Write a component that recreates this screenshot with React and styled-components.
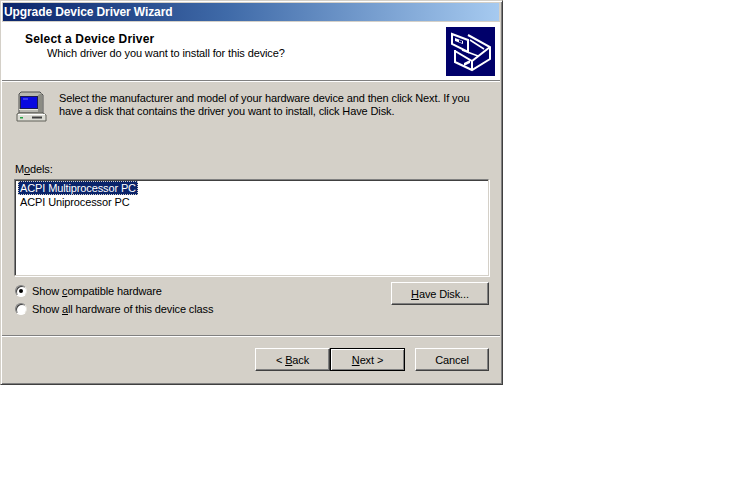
import React from 'react';
import styled, { createGlobalStyle } from 'styled-components';

const GlobalStyle = createGlobalStyle`
  html, body {
    margin: 0;
    padding: 0;
    background: #fff;
  }
  body {
    font-family: "Liberation Sans", Arial, sans-serif;
    font-size: 11px;
    letter-spacing: -0.12px;
    color: #000;
  }
`;

// Window frame
const Wizard = styled.div`
  box-sizing: border-box;
  width: 503px;
  height: 385px;
  display: flex;
  flex-direction: column;
  background: #d4d0c8;
  border: 1px solid;
  border-color: #d4d0c8 #404040 #404040 #d4d0c8;
  box-shadow: inset 1px 1px 0 #fff, inset -1px -1px 0 #808080;
  padding: 2px 3px 0 2px;
`;

const TitleBar = styled.div`
  height: 18px;
  flex: none;
  display: flex;
  align-items: center;
  padding-left: 1px;
  background: linear-gradient(90deg, #0a246a 0%, #3f6aa8 45%, #a6caf0 100%);
  color: #fff;
  font-weight: bold;
  font-size: 12px;
  letter-spacing: -0.1px;
`;

const Header = styled.div`
  height: 58px;
  flex: none;
  margin: 1px -1px 0 -1px;
  display: flex;
  justify-content: space-between;
  background: #fff;
  border-bottom: 1px solid #808080;
  box-shadow: 0 1px 0 #fff;
`;

const HeaderText = styled.div`
  padding: 10px 0 0 23px;
`;

const HeaderTitle = styled.div`
  font-weight: bold;
  font-size: 12px;
  letter-spacing: 0.18px;
  line-height: 14px;
`;

const HeaderSub = styled.div`
  padding-left: 22px;
  line-height: 15px;
`;

const DriverLogo = styled.svg`
  width: 49px;
  height: 49px;
  margin: 5px 5px 0 0;
  flex: none;
`;

const Body = styled.div`
  flex: none;
  height: 254px;
  box-sizing: border-box;
  display: flex;
  flex-direction: column;
  padding: 9px 10px 0 11px;
`;

const Intro = styled.div`
  display: flex;
  gap: 11px;
  padding-left: 2px;
  height: 73px;
  flex: none;
`;

const IntroText = styled.p`
  margin: 0;
  padding-top: 2px;
  width: 425px;
  line-height: 13px;
`;

const PcIcon = styled.svg`
  width: 32px;
  height: 32px;
  flex: none;
`;

const FieldLabel = styled.div`
  flex: none;
  height: 16px;
  padding-left: 1px;
  line-height: 13px;
`;

const ListBox = styled.div`
  box-sizing: border-box;
  flex: none;
  height: 97px;
  padding: 1px;
  background: #fff;
  border: 1px solid;
  border-color: #808080 #d4d0c8 #d4d0c8 #808080;
  box-shadow: inset 1px 1px 0 #404040, 1px 1px 0 #fff;
`;

const ListItem = styled.div`
  box-sizing: border-box;
  width: fit-content;
  height: 14px;
  margin-left: 2px;
  padding: 0 2px 0 2px;
  line-height: 14px;
  background: ${(p) => (p.$selected ? '#0a246a' : 'transparent')};
  color: ${(p) => (p.$selected ? '#fff' : '#000')};
  outline: ${(p) => (p.$selected ? '1px dotted #d4d0c8' : 'none')};
  outline-offset: -1px;
`;

const OptionsRow = styled.div`
  flex: none;
  display: flex;
  justify-content: space-between;
  align-items: flex-start;
  padding-top: 6px;
`;

const RadioGroup = styled.div`
  display: flex;
  flex-direction: column;
  gap: 4px;
  padding-top: 2px;
`;

const RadioRow = styled.label`
  display: flex;
  align-items: center;
  gap: 5px;
  height: 14px;
  padding-left: 1px;
`;

const RadioDot = styled.span`
  box-sizing: border-box;
  width: 12px;
  height: 12px;
  flex: none;
  border-radius: 50%;
  background: #fff;
  border: 1px solid;
  border-color: #808080 #e8e6e0 #fff #808080;
  box-shadow: inset 1px 1px 0 #404040;
  display: flex;
  align-items: center;
  justify-content: center;

  &::after {
    content: '';
    width: 4px;
    height: 4px;
    border-radius: 50%;
    background: ${(p) => (p.$checked ? '#000' : 'transparent')};
  }
`;

const Underlined = styled.span`
  text-decoration: underline;
  text-underline-offset: 1px;
`;

const Button = styled.button`
  box-sizing: border-box;
  flex: none;
  width: ${(p) => p.$width}px;
  height: 23px;
  margin: 0;
  padding: 0;
  font: inherit;
  letter-spacing: inherit;
  color: #000;
  background: #d4d0c8;
  border: 1px solid;
  border-color: ${(p) =>
    p.$default ? '#000' : '#fff #404040 #404040 #fff'};
  box-shadow: ${(p) =>
    p.$default
      ? 'inset 1px 1px 0 #fff, inset -1px -1px 0 #808080'
      : 'inset -1px -1px 0 #808080'};
`;

const Divider = styled.div`
  height: 1px;
  flex: none;
  margin: 0 -1px;
  background: #808080;
  box-shadow: 0 1px 0 #fff;
`;

const Footer = styled.div`
  flex: 1;
  display: flex;
  justify-content: flex-end;
  padding: 12px 10px 0 0;
`;

const NavGroup = styled.div`
  display: flex;
  margin-right: 10px;
`;

function PcGlyph() {
  return (
    <PcIcon viewBox="0 0 32 32">
      <path d="M3 4l2-2h19l3 3v18H3z" fill="#b8b8b0" stroke="#505050" />
      <path d="M22 5l4-2v19l-4 1z" fill="#8c8c84" />
      <rect x="4.5" y="6.5" width="17" height="12" fill="#0808e0" stroke="#1c1c50" />
      <path d="M7 9h5" stroke="#7070ff" />
      <path d="M3 19.5h19" stroke="#e8e8e0" />
      <path d="M1 24l2-1h24l3 2v6H1z" fill="#dcdcd4" stroke="#606058" />
      <path d="M2 24.5h27" stroke="#fff" />
      <rect x="4" y="27" width="3" height="1.5" fill="#20a040" />
      <rect x="16" y="26.5" width="10" height="2" fill="#404040" />
    </PcIcon>
  );
}

function DriverGlyph() {
  return (
    <DriverLogo viewBox="0 0 49 49">
      <rect width="49" height="49" fill="#00006a" />
      <g fill="none" stroke="#fff" strokeWidth="2">
        <path d="M22 8l22 12v12L26 43 9 35V23" />
        <path d="M9 24l17 10 18-14" />
        <path d="M26 34v9" />
        <path d="M16 23l16 6" strokeWidth="1.5" />
        <path d="M24 13l14 9" strokeWidth="1.5" />
      </g>
      <path d="M6 7l16 6v12L6 17z" fill="#00006a" stroke="#fff" strokeWidth="2" />
      <path d="M9 11l8 3v3l-8-3z" fill="#fff" />
      <path d="M13 13l3 1v2l-3-1z" fill="#00006a" />
      <path d="M18 39l6-3v-3l-6 3z" fill="#fff" />
    </DriverLogo>
  );
}

export default function App() {
  return (
    <>
      <GlobalStyle />
      <Wizard>
        <TitleBar>Upgrade Device Driver Wizard</TitleBar>

        <Header>
          <HeaderText>
            <HeaderTitle>Select a Device Driver</HeaderTitle>
            <HeaderSub>Which driver do you want to install for this device?</HeaderSub>
          </HeaderText>
          <DriverGlyph />
        </Header>

        <Body>
          <Intro>
            <PcGlyph />
            <IntroText>
              Select the manufacturer and model of your hardware device and then click Next. If you
              have a disk that contains the driver you want to install, click Have Disk.
            </IntroText>
          </Intro>

          <FieldLabel>
            M<Underlined>o</Underlined>dels:
          </FieldLabel>
          <ListBox>
            <ListItem $selected>ACPI Multiprocessor PC</ListItem>
            <ListItem>ACPI Uniprocessor PC</ListItem>
          </ListBox>

          <OptionsRow>
            <RadioGroup>
              <RadioRow>
                <RadioDot $checked />
                <span>
                  Show <Underlined>c</Underlined>ompatible hardware
                </span>
              </RadioRow>
              <RadioRow>
                <RadioDot />
                <span>
                  Show <Underlined>a</Underlined>ll hardware of this device class
                </span>
              </RadioRow>
            </RadioGroup>
            <Button $width={98}>
              <Underlined>H</Underlined>ave Disk...
            </Button>
          </OptionsRow>
        </Body>

        <Divider />

        <Footer>
          <NavGroup>
            <Button $width={75}>
              &lt; <Underlined>B</Underlined>ack
            </Button>
            <Button $width={75} $default>
              <Underlined>N</Underlined>ext &gt;
            </Button>
          </NavGroup>
          <Button $width={74}>Cancel</Button>
        </Footer>
      </Wizard>
    </>
  );
}
